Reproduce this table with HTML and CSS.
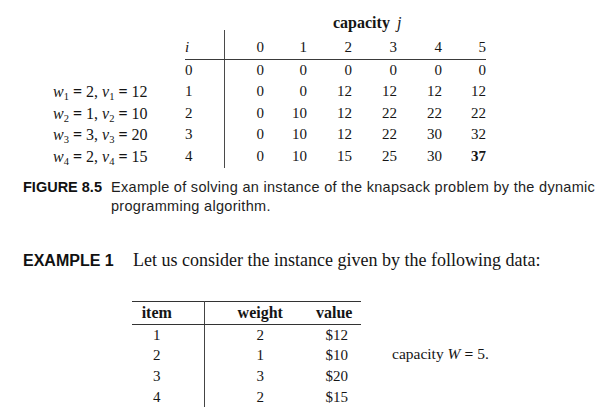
FILE: index.html
```html
<!DOCTYPE html>
<html>
<head>
<meta charset="utf-8">
<link rel="stylesheet" href="styles.css">
</head>
<body>
<div class="figure">
  <div class="cap-head"><b>capacity</b> <i>j</i></div>
  <table class="dp">
    <colgroup>
      <col class="c-label"><col class="c-i"><col class="c-0"><col class="c-1"><col class="c-n"><col class="c-n"><col class="c-n"><col class="c-5">
    </colgroup>
    <tr class="hdr">
      <td></td><td class="ii ul"><i>i</i></td><td class="v0 ul">0</td><td class="ul">1</td><td class="ul">2</td><td class="ul">3</td><td class="ul">4</td><td class="ul">5</td>
    </tr>
    <tr><td></td><td class="ii">0</td><td class="v0">0</td><td>0</td><td>0</td><td>0</td><td>0</td><td>0</td></tr>
    <tr><td class="lbl"><i>w</i><sub>1</sub><span class="eq">=</span>2, <i>v</i><sub>1</sub><span class="eq">=</span>12</td><td class="ii">1</td><td class="v0">0</td><td>0</td><td>12</td><td>12</td><td>12</td><td>12</td></tr>
    <tr><td class="lbl"><i>w</i><sub>2</sub><span class="eq">=</span>1, <i>v</i><sub>2</sub><span class="eq">=</span>10</td><td class="ii">2</td><td class="v0">0</td><td>10</td><td>12</td><td>22</td><td>22</td><td>22</td></tr>
    <tr><td class="lbl"><i>w</i><sub>3</sub><span class="eq">=</span>3, <i>v</i><sub>3</sub><span class="eq">=</span>20</td><td class="ii">3</td><td class="v0">0</td><td>10</td><td>12</td><td>22</td><td>30</td><td>32</td></tr>
    <tr><td class="lbl"><i>w</i><sub>4</sub><span class="eq">=</span>2, <i>v</i><sub>4</sub><span class="eq">=</span>15</td><td class="ii">4</td><td class="v0">0</td><td>10</td><td>15</td><td>25</td><td>30</td><td><b>37</b></td></tr>
  </table>
</div>

<div class="caption">
  <span class="fig-label">FIGURE 8.5</span>
  <span class="fig-text">Example of solving an instance of the knapsack problem by the dynamic programming algorithm.</span>
</div>

<p class="example"><span class="ex-label">EXAMPLE 1</span><span class="ex-text">Let us consider the instance given by the following data:</span></p>

<div class="items-row">
  <table class="items">
    <colgroup><col class="k-item"><col class="k-weight"><col class="k-value"></colgroup>
    <tr class="ihdr"><th class="it">item</th><th class="wt">weight</th><th class="vl">value</th></tr>
    <tr><td class="it">1</td><td class="wt">2</td><td class="vl">$12</td></tr>
    <tr><td class="it">2</td><td class="wt">1</td><td class="vl">$10</td></tr>
    <tr><td class="it">3</td><td class="wt">3</td><td class="vl">$20</td></tr>
    <tr><td class="it">4</td><td class="wt">2</td><td class="vl">$15</td></tr>
  </table>
  <div class="cap-w">capacity <i>W</i><span class="eq">=</span>5.</div>
</div>
</body>
</html>
```
FILE: styles.css
```css
html, body {
  margin: 0;
  padding: 0;
  background: #fff;
}
body {
  width: 613px;
  height: 417px;
  overflow: hidden;
  color: #151515;
  font-family: "Liberation Serif", "Times New Roman", serif;
}
.eq {
  display: inline-block;
  margin: 0 3px;
  font-weight: bold;
}

/* ---------- top DP table ---------- */
.figure {
  padding-top: 15px;
}
.cap-head {
  padding-left: 333px;
  font-size: 16px;
  line-height: 15px;
  height: 15px;
}
.cap-head i {
  margin-left: 3px;
}
.dp {
  margin-left: 53px;
  border-collapse: collapse;
  border-spacing: 0;
  table-layout: fixed;
  width: 433px;
  font-size: 15px;
}
.c-label { width: 132px; }
.c-i { width: 39px; }
.c-0 { width: 40px; }
.c-1 { width: 43px; }
.c-n { width: 45px; }
.c-5 { width: 44px; }
.dp td {
  padding: 0;
  height: 21.6px;
  line-height: 21.6px;
  text-align: right;
  white-space: nowrap;
}
.dp .hdr td {
  padding-top: 7px;
}
.dp td.ul {
  border-bottom: 1.5px solid #3a3a3a;
}
.dp td.ii {
  text-align: left;
}
.dp td.v0 {
  border-left: 1.5px solid #4a4a4a;
}
.dp td.lbl {
  text-align: left;
  font-size: 16px;
}
.dp td.lbl .eq {
  margin: 0 4px;
}
.dp sub {
  font-size: 10.5px;
  line-height: 0;
  vertical-align: -3px;
}
.dp i {
  font-style: italic;
}

/* ---------- caption ---------- */
.caption {
  display: grid;
  grid-template-columns: 88px 500px;
  margin: 10px 0 0 23px;
  font-family: "Liberation Sans", Arial, sans-serif;
  font-size: 14.5px;
  line-height: 19px;
  color: #1e1e1e;
}
.fig-label {
  font-weight: bold;
  color: #111;
}
.fig-text {
  letter-spacing: 0.3px;
}

/* ---------- example ---------- */
.example {
  margin: 33px 0 0 23px;
  display: flex;
  align-items: baseline;
  line-height: 22px;
}
.ex-label {
  font-family: "Liberation Sans", Arial, sans-serif;
  font-weight: bold;
  font-size: 16px;
  width: 110px;
  color: #111;
}
.ex-text {
  font-size: 18px;
}

/* ---------- items table ---------- */
.items-row {
  display: flex;
  align-items: center;
  margin: 29px 0 0 132px;
}
.items {
  border-collapse: collapse;
  border-spacing: 0;
  table-layout: fixed;
  width: 229px;
  border-top: 1.5px solid #333;
  font-size: 15px;
}
.k-item { width: 72px; }
.k-weight { width: 112px; }
.k-value { width: 45px; }
.items th {
  font-weight: bold;
  font-size: 16px;
  height: 22px;
  line-height: 22px;
  padding: 0;
  border-bottom: 1.5px solid #333;
}
.items td {
  padding: 0;
  height: 20.7px;
  line-height: 20.7px;
}
.items .it {
  text-align: center;
  padding-right: 22px;
}
.items .wt {
  text-align: center;
  border-left: 1.5px solid #444;
}
.items .vl {
  text-align: right;
  padding-right: 13px;
}
.items th.vl {
  padding-right: 10px;
}
.cap-w {
  margin-left: 31px;
  font-size: 15.5px;
}
.cap-w .eq {
  margin: 0 4px;
}
```
